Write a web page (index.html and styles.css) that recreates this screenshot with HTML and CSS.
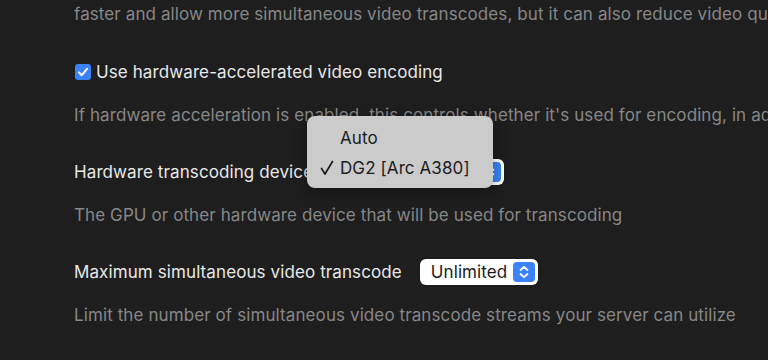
FILE: index.html
```html
<!DOCTYPE html>
<html>
<head>
<meta charset="utf-8">
<link rel="stylesheet" href="styles.css">
</head>
<body>
<div class="page">
  <p class="desc top">faster and allow more simultaneous video transcodes, but it can also reduce video quality and increase file size.</p>

  <div class="group">
    <div class="row">
      <span class="checkbox">
        <svg viewBox="0 0 16 16" width="16" height="16"><path d="M4 8.4 L6.8 11.2 L12 4.8" fill="none" stroke="#fff" stroke-width="2" stroke-linecap="round" stroke-linejoin="round"/></svg>
      </span>
      <span class="label">Use hardware-accelerated video encoding</span>
    </div>
    <p class="desc">If hardware acceleration is enabled, this controls whether it's used for encoding, in addition to decoding.</p>
  </div>

  <div class="group">
    <div class="row">
      <span class="label">Hardware transcoding device</span>
      <span class="select device">
        <span class="value">DG2 [Arc A380]</span>
        <span class="arrows"><svg viewBox="0 0 22 20" width="22" height="20"><path d="M7.5 8 L11 4.8 L14.5 8 M7.5 12 L11 15.2 L14.5 12" fill="none" stroke="#fff" stroke-width="1.8" stroke-linecap="round" stroke-linejoin="round"/></svg></span>
      </span>
      <div class="menu">
        <div class="item"><span class="check"></span>Auto</div>
        <div class="item"><span class="check"><svg viewBox="0 0 14 16" width="14" height="16"><path d="M1.5 8.5 L5 14 L12.5 1.5" fill="none" stroke="#1c1c1c" stroke-width="1.7" stroke-linecap="round" stroke-linejoin="round"/></svg></span>DG2 [Arc A380]</div>
      </div>
    </div>
    <p class="desc">The GPU or other hardware device that will be used for transcoding</p>
  </div>

  <div class="group">
    <div class="row">
      <span class="label">Maximum simultaneous video transcode</span>
      <span class="select">
        <span class="value">Unlimited</span>
        <span class="arrows"><svg viewBox="0 0 22 20" width="22" height="20"><path d="M7.5 8 L11 4.8 L14.5 8 M7.5 12 L11 15.2 L14.5 12" fill="none" stroke="#fff" stroke-width="1.8" stroke-linecap="round" stroke-linejoin="round"/></svg></span>
      </span>
    </div>
    <p class="desc">Limit the number of simultaneous video transcode streams your server can utilize</p>
  </div>
</div>
</body>
</html>
```

FILE: styles.css
```css
html, body {
  margin: 0;
  padding: 0;
  background: #1e1e1e;
  overflow: hidden;
}
body {
  width: 768px;
  height: 360px;
  font-family: Inter, "Liberation Sans", Arial, sans-serif;
  font-size: 17px;
  letter-spacing: 0.1px;
}
.page {
  width: 768px;
  box-sizing: border-box;
  overflow: hidden;
  padding: 4px 0 0 74px;
  display: flex;
  flex-direction: column;
  gap: 34px;
}
.desc {
  margin: 0;
  height: 20px;
  line-height: 20px;
  color: #878787;
  white-space: nowrap;
}
.group {
  display: flex;
  flex-direction: column;
  gap: 20px;
}
.top + .group {
  margin-top: 1px;
}
.row {
  position: relative;
  height: 26px;
  display: flex;
  align-items: center;
  color: #e8e8e8;
}
.label {
  white-space: nowrap;
}
.checkbox {
  width: 16px;
  height: 16px;
  border-radius: 3px;
  background: #3a82f7;
  margin: 0 5px 0 1px;
  display: flex;
}
.select {
  margin-left: 18px;
  height: 26px;
  box-sizing: border-box;
  background: #ffffff;
  border-radius: 6px;
  display: flex;
  align-items: center;
  padding: 0 3px 0 11px;
  gap: 6px;
  color: #1a1a1a;
}
.select.device {
  margin-left: 5px;
  width: 186px;
  justify-content: space-between;
}
.arrows {
  width: 22px;
  height: 20px;
  border-radius: 4px;
  background: #3a82f7;
  display: flex;
}
.menu {
  position: absolute;
  left: 233px;
  top: -43px;
  width: 186px;
  height: 72px;
  box-sizing: border-box;
  padding: 7px 0;
  background: #cbcbcb;
  border-radius: 8px;
  color: #1c1c1c;
  box-shadow: 0 4px 14px rgba(0,0,0,0.35);
}
.item {
  height: 30px;
  line-height: 30px;
  display: flex;
  align-items: center;
  white-space: nowrap;
}
.check {
  width: 33px;
  height: 16px;
  padding-left: 13px;
  box-sizing: border-box;
  display: flex;
}
```
